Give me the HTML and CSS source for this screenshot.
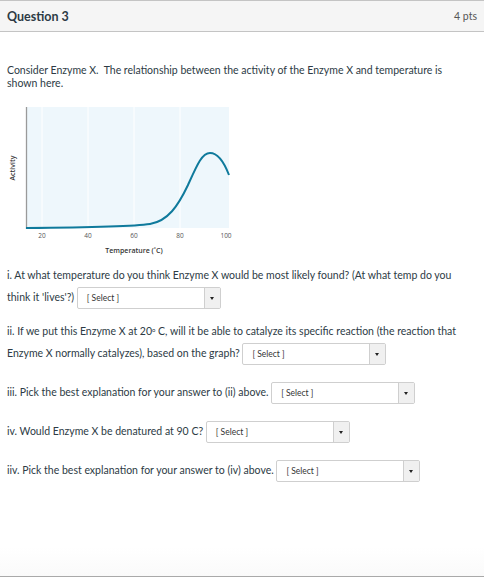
FILE: index.html
```html
<!DOCTYPE html>
<html lang="en">
<head>
  <meta charset="UTF-8" />
  <title>Question 3</title>
  <link rel="stylesheet" href="styles.css">
</head>
<body>
  <div class="question">
    <div class="question-header">
      <span class="question-title">Question 3</span>
      <span class="question-points">4 pts</span>
    </div>

    <div class="question-body">
      <p class="intro">Consider Enzyme X.&nbsp; The relationship between the activity of the Enzyme X and temperature is shown here.</p>

      <svg class="chart" width="232" height="156" viewBox="0 0 232 156">
        <rect x="19" y="7" width="203" height="121" fill="#eef7fc" />
        <g stroke="#ffffff" stroke-width="1">
          <line x1="35" y1="7" x2="35" y2="128" />
          <line x1="81" y1="7" x2="81" y2="128" />
          <line x1="127" y1="7" x2="127" y2="128" />
          <line x1="173" y1="7" x2="173" y2="128" />
        </g>
        <line x1="19.5" y1="7" x2="19.5" y2="129" stroke="#9a9a9a" stroke-width="1.3" />
        <path d="M19,128 C73,127.5 123,127 143,124 C161,121 171,106 181,85 C190,65 195,53 203,53 C211,53 217,62 222,75"
              fill="none" stroke="#0f7a9c" stroke-width="2" />
        <g class="tick" text-anchor="middle">
          <text x="35" y="138">20</text>
          <text x="81" y="138">40</text>
          <text x="127" y="138">60</text>
          <text x="173" y="138">80</text>
          <text x="219" y="138">100</text>
        </g>
        <text class="axis-label" x="127" y="153" text-anchor="middle">Temperature (˚C)</text>
        <text class="axis-label" x="0" y="0" text-anchor="middle" transform="translate(8 68) rotate(-90)">Activity</text>
      </svg>

      <p>i. At what temperature do you think Enzyme X would be most likely found? (At what temp do you think it 'lives'?)
        <span class="select"><span class="select-label">[ Select ]</span><span class="select-arrow"></span></span>
      </p>

      <p>ii. If we put this Enzyme X at 20<sup class="deg">o</sup> C, will it be able to catalyze its specific reaction (the reaction that Enzyme X normally catalyzes), based on the graph?
        <span class="select"><span class="select-label">[ Select ]</span><span class="select-arrow"></span></span>
      </p>

      <p>iii. Pick the best explanation for your answer to (ii) above.
        <span class="select"><span class="select-label">[ Select ]</span><span class="select-arrow"></span></span>
      </p>

      <p>iv. Would Enzyme X be denatured at 90 C?
        <span class="select"><span class="select-label">[ Select ]</span><span class="select-arrow"></span></span>
      </p>

      <p>iiv. Pick the best explanation for your answer to (iv) above.
        <span class="select"><span class="select-label">[ Select ]</span><span class="select-arrow"></span></span>
      </p>
    </div>
  </div>
</body>
</html>
```

FILE: styles.css
```css
body {
  margin: 0;
  font-family: Lato, "Open Sans", sans-serif;
  color: #2d3b45;
  background-color: white;
}

.question {
  border-top: 1px solid #c4c4c4;
  border-bottom: 1px solid #a9a9a9;
}

.question-header {
  display: flex;
  justify-content: space-between;
  align-items: center;
  height: 30px;
  padding: 0 7px;
  background-color: #f5f5f5;
  border-bottom: 1px solid #c4c4c4;
}

.question-title {
  font-size: 12.5px;
  font-weight: bold;
  color: #2d3b45;
}

.question-points {
  font-size: 10.5px;
  color: #555;
}

.question-body {
  padding: 0 20px 0 7px;
  height: 544px;
  background: linear-gradient(to bottom, #fff 0, #fff 515px, #fafafa 544px);
  font-size: 10.5px;
}

.intro {
  margin: 0;
  padding-top: 32px;
  line-height: 13px;
}

.chart {
  display: block;
  margin-top: 10px;
}

.chart .tick {
  font-family: "Open Sans", sans-serif;
  font-size: 6.5px;
  fill: #555;
}

.chart .axis-label {
  font-family: "Open Sans", sans-serif;
  font-size: 7px;
  font-weight: 600;
  fill: #333;
}

p {
  margin: 11px 0;
  line-height: 17px;
}

.deg {
  font-size: 6px;
  vertical-align: 3px;
  line-height: 0;
}

.select {
  display: inline-flex;
  align-items: stretch;
  width: 144px;
  height: 22px;
  margin: 3px 0;
  vertical-align: middle;
  border: 1px solid #cfcfcf;
  border-radius: 2px;
  background-color: white;
  box-sizing: border-box;
}

.select-label {
  flex: 1;
  display: flex;
  align-items: center;
  padding-left: 9px;
  font-size: 8.5px;
  color: #333;
}

.select-arrow {
  width: 15px;
  position: relative;
  background-color: #f0f0f0;
  border-left: 1px solid #cfcfcf;
}

.select-arrow::after {
  content: "";
  position: absolute;
  left: 5px;
  top: 9px;
  border-left: 2.5px solid transparent;
  border-right: 2.5px solid transparent;
  border-top: 3px solid #222;
}
```
